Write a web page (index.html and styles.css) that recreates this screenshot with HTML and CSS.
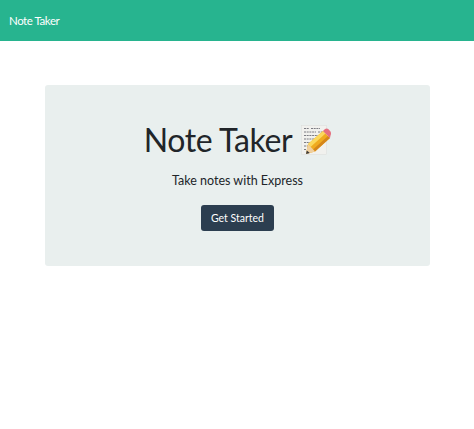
FILE: index.html
```html
<!DOCTYPE html>
<html lang="en">
<head>
  <meta charset="UTF-8" />
  <title>Note Taker</title>
  <link rel="stylesheet" href="styles.css">
</head>
<body>

<nav class="navbar">
  <a class="navbar-brand" href="#">Note Taker</a>
</nav>

<main class="container">
  <div class="jumbotron">
    <h1 class="title">
      Note Taker
      <svg class="memo" viewBox="0 0 30 30" aria-hidden="true">
        <rect x="0.500" y="0.500" width="25" height="29" fill="#f1f1ee" stroke="#dcdcd9" stroke-width="0.5" />
        <g stroke="#5f6068" stroke-width="0.8" stroke-dasharray="2 0.7" fill="none">
          <path d="M3 3.500h5M10 3.500h9" />
          <path d="M3 7h12M17 7h5" />
          <path d="M3 10.500h14" />
          <path d="M3 14h11" />
          <path d="M3 17.500h8" />
          <path d="M3 21h5" />
          <path d="M3 24.500h2" />
        </g>
        <path d="M5 29 L7 19 L22 6 L29 13 L14 26.500 Z" fill="#f0ab1f" />
        <path d="M7 19 L22 6 L24.500 8.500 L9.500 22 Z" fill="#fbd85c" />
        <path d="M14 26.500 L29 13 L27 11 L12 24.500 Z" fill="#d5861a" />
        <path d="M22 6 L24 4 Q26 2.800 27.500 4.200 L29.500 6.500 Q30.500 8.500 29.500 10.500 L29 13 Z" fill="#e5707f" />
        <path d="M5 29 L7 19 L14 26.500 Z" fill="#efcf9f" />
        <path d="M5 29 L5.800 25.500 L8.800 28 Z" fill="#3a3a3a" />
      </svg>
    </h1>
    <p class="lead">Take notes with Express</p>
    <a class="btn" href="#">Get Started</a>
  </div>
</main>

</body>
</html>
```

FILE: styles.css
```css
body {
  margin: 0;
  padding: 0;
  font-family: 'Lato', 'Liberation Sans', sans-serif;
  color: #212529;
  background: #fff;
}

.navbar {
  height: 41px;
  display: flex;
  align-items: center;
  padding: 0 9px;
  background: #27b48f;
}

.navbar-brand {
  color: #fff;
  font-size: 11.5px;
  letter-spacing: -0.45px;
  text-decoration: none;
}

.container {
  padding: 44px 44px 0 45px;
}

.jumbotron {
  height: 181px;
  box-sizing: border-box;
  padding-top: 35px;
  background: #e9efee;
  border-radius: 3px;
  text-align: center;
}

.title {
  margin: 0;
  display: flex;
  justify-content: center;
  align-items: center;
  gap: 9px;
  font-size: 32px;
  font-weight: 400;
  letter-spacing: -0.4px;
  line-height: 40px;
}

.memo {
  width: 30px;
  height: 30px;
}

.lead {
  margin: 11px 0 0;
  font-size: 12.5px;
  line-height: 20px;
}

.btn {
  display: inline-block;
  margin-top: 14px;
  padding: 0 10px;
  line-height: 26px;
  font-size: 10.5px;
  color: #fff;
  background: #2c3e50;
  border-radius: 3px;
  text-decoration: none;
}
```
